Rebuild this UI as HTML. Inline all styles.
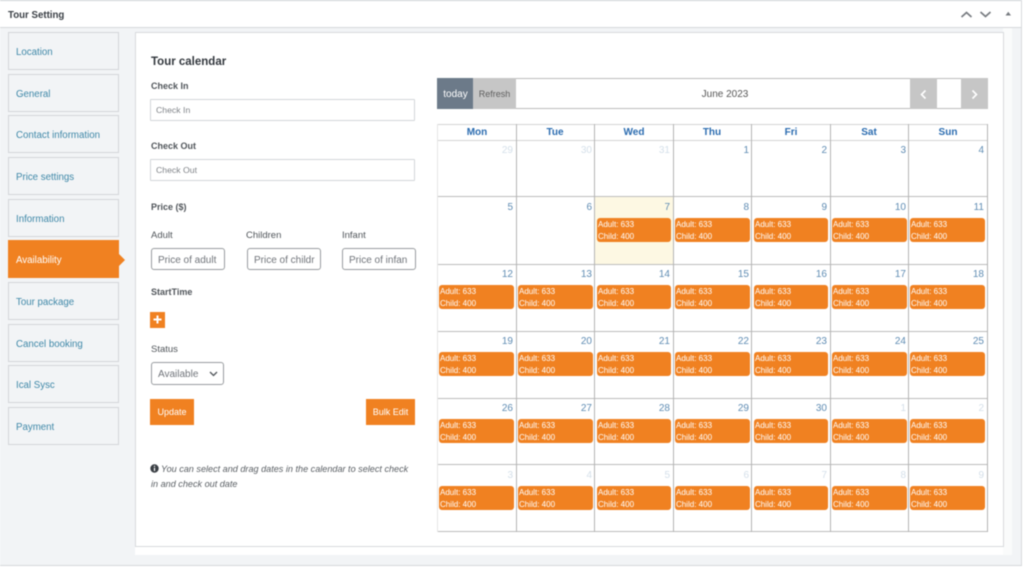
<!DOCTYPE html>
<html lang="en"><head><meta charset="utf-8"><title>Tour Setting</title>
<style>
html,body{margin:0;padding:0;width:1024px;height:567px;overflow:hidden;background:#fff;font-family:"Liberation Sans",sans-serif}
#p{position:relative;width:1024px;height:567px;overflow:hidden;filter:blur(.4px)}
#p div{position:absolute;box-sizing:border-box}
.tab{left:8px;width:111px;height:38px;border:1px solid #d3d6d9;background:#f2f4f6;color:#3f88a8;font-size:9.7px;line-height:36px;padding:2px 0 0 7px;white-space:nowrap}
.lb{font-size:9.5px;color:#50555a;line-height:12px;white-space:nowrap}
.b{font-weight:bold;font-size:9px}
.in{border:1px solid #d3d6d9;background:#fff;color:#808489;font-size:8.7px;line-height:20px;padding-left:5px;border-radius:1px;white-space:nowrap;overflow:hidden}
.pr{top:248px;height:22px;width:74px;border:1px solid #999ca0;border-radius:3px;background:#fff;color:#70747a;font-size:10px;line-height:23px;padding-left:6px;white-space:nowrap;overflow:hidden}
.or{background:#f08121;color:#fff;font-size:9px;text-align:center}
.vl{width:1px;top:124px;height:408px;background:#b4b4b4}
.hl{height:1px;left:437px;width:551px;background:#bdbdbd}
.dh{top:125px;height:15px;line-height:16px;font-size:10px;font-weight:bold;color:#2b6cb0;text-align:center;width:78px}
.n{font-size:10px;line-height:12px;color:#5f8cb3;text-align:right;width:76px;white-space:nowrap}
.m{color:#d5e0ea}
.e{height:24px;background:#f08121;border-radius:3px;color:#fff;font-size:8px;line-height:11.5px;padding:1px 0 0 1px;white-space:nowrap;overflow:hidden}
.c1{left:439px;width:75px}.c2{left:518px;width:75px}.c3{left:597px;width:74px}.c4{left:675px;width:75px}.c5{left:754px;width:74px}.c6{left:832px;width:75px}.c7{left:910px;width:75px}
.r2{top:218px}.r3{top:285px}.r4{top:352px}.r5{top:419px}.r6{top:486px}
.d1{left:437px}.d2{left:516px}.d3{left:594px}.d4{left:673px}.d5{left:751px}.d6{left:830px}.d7{left:908px}
.t1{top:145px}.t2{top:202px}.t3{top:269px}.t4{top:336px}.t5{top:403px}.t6{top:470px}
</style></head><body>
<div id="p">
<!-- page background -->
<div style="left:0;top:0;width:1024px;height:567px;background:#fff"></div>
<div style="left:0;top:28px;width:1021px;height:537px;background:#f2f4f6"></div>
<div style="left:0;top:0;width:1021px;height:1px;background:#ccd0d4"></div>
<div style="left:0;top:27px;width:1021px;height:1px;background:#d5d7da"></div>
<div style="left:1021px;top:0;width:1px;height:566px;background:#d8dadd"></div>
<div style="left:0;top:565px;width:1022px;height:1px;background:#d5d7da"></div>
<div style="left:135px;top:546px;width:877px;height:9px;background:#fff"></div>
<div style="left:1003px;top:28px;width:9px;height:527px;background:#fafbfb"></div>
<!-- header -->
<div style="left:8px;top:8px;font-size:9.700px;line-height:12px;padding-top:2px;font-weight:bold;color:#3a3f45;white-space:nowrap">Tour Setting</div>
<svg style="position:absolute;left:960px;top:9px" width="54" height="10" viewBox="0 0 54 10"><path d="M1.500 8L6.500 3.500L11.500 8" fill="none" stroke="#777b80" stroke-width="1.700"/><path d="M20.500 3L25.500 7.500L30.500 3" fill="none" stroke="#777b80" stroke-width="1.700"/><path d="M45.500 6.500L51 6.500L48.250 2.800Z" fill="#777b80"/></svg>
<!-- tabs -->
<div class="tab" style="top:32px">Location</div>
<div class="tab" style="top:74px">General</div>
<div class="tab" style="top:115px">Contact information</div>
<div class="tab" style="top:157px">Price settings</div>
<div class="tab" style="top:199px">Information</div>
<div class="tab" style="top:240px;background:#f08121;border-color:#f08121;color:#fff">Availability</div>
<svg style="position:absolute;left:119px;top:254px" width="7" height="12"><path d="M0 0L6 6L0 12Z" fill="#f08121"/></svg>
<div class="tab" style="top:282px">Tour package</div>
<div class="tab" style="top:324px">Cancel booking</div>
<div class="tab" style="top:365px">Ical Sysc</div>
<div class="tab" style="top:407px">Payment</div>
<!-- panel -->
<div style="left:135px;top:32px;width:869px;height:515px;background:#fff;border:1px solid #d8dadd"></div>
<div style="left:151px;top:55px;font-size:11.500px;font-weight:bold;line-height:15px;color:#33383e;white-space:nowrap">Tour calendar</div>
<div class="lb b" style="left:151px;top:80px">Check In</div>
<div class="in" style="left:150px;top:99px;width:265px;height:22px">Check In</div>
<div class="lb b" style="left:151px;top:140px">Check Out</div>
<div class="in" style="left:150px;top:159px;width:265px;height:22px;line-height:21px">Check Out</div>
<div class="lb b" style="left:151px;top:201px">Price ($)</div>
<div class="lb" style="left:151px;top:230px">Adult</div>
<div class="lb" style="left:246px;top:230px">Children</div>
<div class="lb" style="left:342px;top:230px">Infant</div>
<div class="pr" style="left:151px">Price of adult</div>
<div class="pr" style="left:247px">Price of childr</div>
<div class="pr" style="left:342px">Price of infan</div>
<div class="lb b" style="left:151px;top:286px">StartTime</div>
<div class="or" style="left:150px;top:312px;width:15px;height:16px"></div>
<svg style="position:absolute;left:153px;top:315px" width="9" height="9"><path d="M4.500 .500V8.500M.500 4.500H8.500" stroke="#fff" stroke-width="2"/></svg>
<div class="lb" style="left:151px;top:344px">Status</div>
<div class="pr" style="left:151px;top:362px;width:73px;height:23px;line-height:23px">Available</div>
<svg style="position:absolute;left:209px;top:371px" width="9" height="6"><path d="M1 1L4.500 4.500L8 1" fill="none" stroke="#50555a" stroke-width="1.300"/></svg>
<div class="or" style="left:150px;top:399px;width:44px;height:26px;line-height:27px">Update</div>
<div class="or" style="left:366px;top:399px;width:49px;height:26px;line-height:27px">Bulk Edit</div>
<svg style="position:absolute;left:150px;top:464px" width="9" height="9"><circle cx="4.500" cy="4.500" r="4.200" fill="#3a3f44"/><path d="M4.500 3.800V7M4.500 1.700V2.900" stroke="#fff" stroke-width="1.200"/></svg>
<div style="left:161px;top:463px;font-size:9.100px;line-height:12px;font-style:italic;color:#5a5f64;white-space:nowrap">You can select and drag dates in the calendar to select check</div>
<div style="left:151px;top:478px;font-size:9.100px;line-height:12px;font-style:italic;color:#5a5f64;white-space:nowrap">in and check out date</div>
<!-- toolbar -->
<div style="left:437px;top:78px;width:551px;height:31px;border:1px solid #bcbcbc;background:#fff"></div>
<div style="left:437px;top:78px;width:36px;height:31px;background:#6c7a89;color:#fff;font-size:10px;line-height:33px;text-align:center;padding-left:1px">today</div>
<div style="left:473px;top:78px;width:43px;height:31px;background:#c6c6c6;color:#5f5f5f;font-size:9px;line-height:32px;text-align:center">Refresh</div>
<div style="left:516px;top:87px;width:418px;line-height:16px;font-size:10px;color:#555;text-align:center">June 2023</div>
<div style="left:910px;top:78px;width:27px;height:31px;background:#c6c6c6"></div>
<div style="left:961px;top:78px;width:27px;height:31px;background:#c6c6c6"></div>
<svg style="position:absolute;left:919px;top:89px" width="9" height="11"><path d="M6.500 1.500L2.500 5.500L6.500 9.500" fill="none" stroke="#fff" stroke-width="1.600"/></svg>
<svg style="position:absolute;left:970px;top:89px" width="9" height="11"><path d="M2.500 1.500L6.500 5.500L2.500 9.500" fill="none" stroke="#fff" stroke-width="1.600"/></svg>
<!-- today cell -->
<div style="left:595px;top:197px;width:78px;height:67px;background:#fdf8e3"></div>
<!-- grid lines -->
<div class="hl" style="top:124px;background:#d5d5d5"></div><div class="hl" style="top:140px;background:#d5d5d5"></div>
<div class="hl" style="top:196px"></div><div class="hl" style="top:264px"></div><div class="hl" style="top:331px"></div><div class="hl" style="top:398px"></div><div class="hl" style="top:464px"></div><div class="hl" style="top:531px"></div>
<div class="vl" style="left:437px;background:#e6e6e6"></div><div class="vl" style="left:516px"></div><div class="vl" style="left:594px"></div><div class="vl" style="left:673px"></div><div class="vl" style="left:751px"></div><div class="vl" style="left:830px"></div><div class="vl" style="left:908px"></div><div class="vl" style="left:987px"></div>
<!-- day names -->
<div class="dh" style="left:438px">Mon</div><div class="dh" style="left:516px">Tue</div><div class="dh" style="left:595px">Wed</div><div class="dh" style="left:673px">Thu</div><div class="dh" style="left:752px">Fri</div><div class="dh" style="left:830px">Sat</div><div class="dh" style="left:909px">Sun</div>
<!-- dates -->
<div class="n m d1 t1">29</div><div class="n m d2 t1">30</div><div class="n m d3 t1">31</div><div class="n d4 t1">1</div><div class="n d5 t1">2</div><div class="n d6 t1">3</div><div class="n d7 t1">4</div>
<div class="n d1 t2">5</div><div class="n d2 t2">6</div><div class="n d3 t2">7</div><div class="n d4 t2">8</div><div class="n d5 t2">9</div><div class="n d6 t2">10</div><div class="n d7 t2">11</div>
<div class="n d1 t3">12</div><div class="n d2 t3">13</div><div class="n d3 t3">14</div><div class="n d4 t3">15</div><div class="n d5 t3">16</div><div class="n d6 t3">17</div><div class="n d7 t3">18</div>
<div class="n d1 t4">19</div><div class="n d2 t4">20</div><div class="n d3 t4">21</div><div class="n d4 t4">22</div><div class="n d5 t4">23</div><div class="n d6 t4">24</div><div class="n d7 t4">25</div>
<div class="n d1 t5">26</div><div class="n d2 t5">27</div><div class="n d3 t5">28</div><div class="n d4 t5">29</div><div class="n d5 t5">30</div><div class="n m d6 t5">1</div><div class="n m d7 t5">2</div>
<div class="n m d1 t6">3</div><div class="n m d2 t6">4</div><div class="n m d3 t6">5</div><div class="n m d4 t6">6</div><div class="n m d5 t6">7</div><div class="n m d6 t6">8</div><div class="n m d7 t6">9</div>
<!-- events -->
<div class="e c3 r2">Adult: 633<br>Child: 400</div><div class="e c4 r2">Adult: 633<br>Child: 400</div><div class="e c5 r2">Adult: 633<br>Child: 400</div><div class="e c6 r2">Adult: 633<br>Child: 400</div><div class="e c7 r2">Adult: 633<br>Child: 400</div>
<div class="e c1 r3">Adult: 633<br>Child: 400</div><div class="e c2 r3">Adult: 633<br>Child: 400</div><div class="e c3 r3">Adult: 633<br>Child: 400</div><div class="e c4 r3">Adult: 633<br>Child: 400</div><div class="e c5 r3">Adult: 633<br>Child: 400</div><div class="e c6 r3">Adult: 633<br>Child: 400</div><div class="e c7 r3">Adult: 633<br>Child: 400</div>
<div class="e c1 r4">Adult: 633<br>Child: 400</div><div class="e c2 r4">Adult: 633<br>Child: 400</div><div class="e c3 r4">Adult: 633<br>Child: 400</div><div class="e c4 r4">Adult: 633<br>Child: 400</div><div class="e c5 r4">Adult: 633<br>Child: 400</div><div class="e c6 r4">Adult: 633<br>Child: 400</div><div class="e c7 r4">Adult: 633<br>Child: 400</div>
<div class="e c1 r5">Adult: 633<br>Child: 400</div><div class="e c2 r5">Adult: 633<br>Child: 400</div><div class="e c3 r5">Adult: 633<br>Child: 400</div><div class="e c4 r5">Adult: 633<br>Child: 400</div><div class="e c5 r5">Adult: 633<br>Child: 400</div><div class="e c6 r5">Adult: 633<br>Child: 400</div><div class="e c7 r5">Adult: 633<br>Child: 400</div>
<div class="e c1 r6">Adult: 633<br>Child: 400</div><div class="e c2 r6">Adult: 633<br>Child: 400</div><div class="e c3 r6">Adult: 633<br>Child: 400</div><div class="e c4 r6">Adult: 633<br>Child: 400</div><div class="e c5 r6">Adult: 633<br>Child: 400</div><div class="e c6 r6">Adult: 633<br>Child: 400</div><div class="e c7 r6">Adult: 633<br>Child: 400</div>
</div>
</body></html>
